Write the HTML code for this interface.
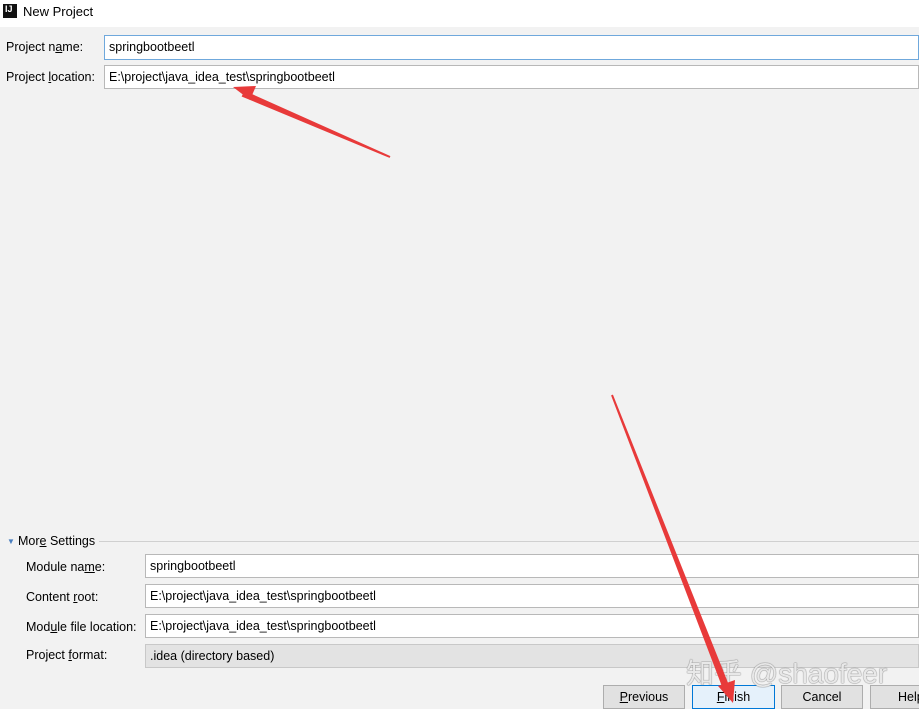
<!DOCTYPE html>
<html><head><style>
body{margin:0;width:919px;height:708px;overflow:hidden;background:#f2f2f2;font-family:"Liberation Sans","Noto Sans CJK SC",sans-serif;font-size:12.5px;color:#000;position:relative}
.t{position:absolute;left:0;top:0;width:919px;height:27px;background:#fff}
.a{position:absolute;white-space:nowrap}
.f{position:absolute;background:#fff;border:1px solid #b8b8b8;box-sizing:border-box;padding-left:4px;line-height:22px;white-space:nowrap}
.b{position:absolute;top:685px;height:24px;border:1px solid #adadad;background:#e1e1e1;box-sizing:border-box;text-align:center;line-height:22px}
</style></head><body>
<div class="t"></div>
<div class="a" style="left:3px;top:4px;width:14px;height:14px;background:#111"></div>
<div class="a" style="left:5px;top:4px;color:#fff;font-size:9px;font-weight:bold">IJ</div>
<div class="a" style="left:23px;top:4px;font-size:13px">New Project</div>
<div class="a" style="left:6px;top:40px">Project n<u>a</u>me:</div>
<div class="f" style="left:104px;top:35px;width:815px;height:25px;border-color:#6fa8dc">springbootbeetl</div>
<div class="a" style="left:6px;top:70px">Project <u>l</u>ocation:</div>
<div class="f" style="left:104px;top:65px;width:815px;height:24px">E:\project\java_idea_test\springbootbeetl</div>
<div class="a" style="left:7px;top:537px;font-size:8px;color:#4a7fc0">▼</div>
<div class="a" style="left:18px;top:534px">Mor<u>e</u> Settings</div>
<div class="a" style="left:99px;top:541px;width:820px;height:1px;background:#d0d0d0"></div>
<div class="a" style="left:26px;top:560px">Module na<u>m</u>e:</div>
<div class="f" style="left:145px;top:554px;width:774px;height:24px">springbootbeetl</div>
<div class="a" style="left:26px;top:590px">Content <u>r</u>oot:</div>
<div class="f" style="left:145px;top:584px;width:774px;height:24px">E:\project\java_idea_test\springbootbeetl</div>
<div class="a" style="left:26px;top:620px">Mod<u>u</u>le file location:</div>
<div class="f" style="left:145px;top:614px;width:774px;height:24px">E:\project\java_idea_test\springbootbeetl</div>
<div class="a" style="left:26px;top:648px">Project <u>f</u>ormat:</div>
<div class="f" style="left:145px;top:644px;width:774px;height:24px;background:#e3e3e3;border-color:#c8c8c8">.idea (directory based)</div>
<div class="b" style="left:603px;width:82px"><u>P</u>revious</div>
<div class="b" style="left:692px;width:83px;background:#e5f1fb;border-color:#0078d7"><u>F</u>inish</div>
<div class="b" style="left:781px;width:82px">Cancel</div>
<div class="b" style="left:870px;width:60px;text-align:left;padding-left:27px">Help</div>
<div class="a" style="left:686px;top:652px;font-size:28px;color:#e8e8e8;text-shadow:0 0 1px #777,0 0 1px #777">知乎 @shaofeer</div>
<svg class="a" style="left:0;top:0" width="919" height="708">
<path d="M390 157 L245 92 L243 96 Z" stroke="#e83a3a" stroke-width="2" fill="#e83a3a"/>
<path d="M233 87 L256 86 L250 100 Z" fill="#e83a3a"/>
<path d="M612 395 L729 688 L724 689 Z" stroke="#e83a3a" stroke-width="2" fill="#e83a3a"/>
<path d="M733 703 L718 686 L735 680 Z" fill="#e83a3a"/>
</svg>
</body></html>
